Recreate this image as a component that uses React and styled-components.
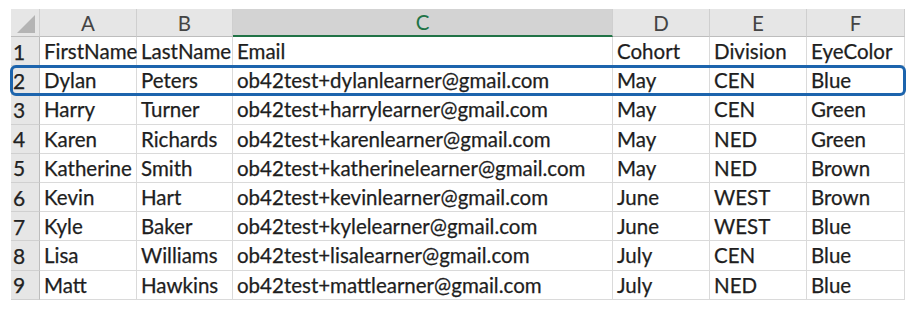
import React from "react";
import styled, { createGlobalStyle } from "styled-components";

const COLUMNS = ["A", "B", "C", "D", "E", "F"];
const ACTIVE_COLUMN = "C";
const SELECTED_ROW = 2;

const rows = [
    ["FirstName", "LastName", "Email", "Cohort", "Division", "EyeColor"],
    ["Dylan", "Peters", "ob42test+dylanlearner@gmail.com", "May", "CEN", "Blue"],
    ["Harry", "Turner", "ob42test+harrylearner@gmail.com", "May", "CEN", "Green"],
    ["Karen", "Richards", "ob42test+karenlearner@gmail.com", "May", "NED", "Green"],
    ["Katherine", "Smith", "ob42test+katherinelearner@gmail.com", "May", "NED", "Brown"],
    ["Kevin", "Hart", "ob42test+kevinlearner@gmail.com", "June", "WEST", "Brown"],
    ["Kyle", "Baker", "ob42test+kylelearner@gmail.com", "June", "WEST", "Blue"],
    ["Lisa", "Williams", "ob42test+lisalearner@gmail.com", "July", "CEN", "Blue"],
    ["Matt", "Hawkins", "ob42test+mattlearner@gmail.com", "July", "NED", "Blue"],
];

function App() {
    return (
        <>
            <GlobalStyle />
            <Page>
                <SheetWrap>
                    <Sheet>
                        <CornerCell>
                            <svg width="29" height="28" viewBox="0 0 29 28">
                                <polygon points="6,24 24,24 24,6" fill="#b4b4b4" />
                            </svg>
                        </CornerCell>
                        {COLUMNS.map((col) => (
                            <ColHeader key={col} active={col === ACTIVE_COLUMN}>
                                {col}
                            </ColHeader>
                        ))}
                        {rows.map((row, i) => (
                            <React.Fragment key={i}>
                                <RowHeader>{i + 1}</RowHeader>
                                {row.map((value, j) => (
                                    <Cell key={j}>{value}</Cell>
                                ))}
                            </React.Fragment>
                        ))}
                    </Sheet>
                    <Selection row={SELECTED_ROW} />
                </SheetWrap>
            </Page>
        </>
    );
}

export default App;

const HEADER_H = 28;
const ROW_H = 29.2;

const GlobalStyle = createGlobalStyle`
    body {
        margin: 0;
        background: #fff;
        font-family: "Lato", "Liberation Sans", sans-serif;
    }
`;

const Page = styled.div`
    width: 917px;
    height: 311px;
    padding: 9px 0 0 11px;
    box-sizing: border-box;
    overflow: hidden;
`;

const SheetWrap = styled.div`
    position: relative;
    width: fit-content;
`;

const Sheet = styled.div`
    display: grid;
    grid-template-columns: 29px 97px 96px 380px 97px 97px 98px;
    grid-template-rows: ${HEADER_H}px repeat(9, ${ROW_H}px);
`;

const CornerCell = styled.div`
    background: #e6e6e6;
    border-right: 1px solid #d0d0d0;
    border-bottom: 1px solid #bdbdbd;
    box-sizing: border-box;
    svg {
        display: block;
    }
`;

const ColHeader = styled.div`
    display: flex;
    align-items: center;
    justify-content: center;
    box-sizing: border-box;
    background: ${({ active }) => (active ? "#d3d3d3" : "#e6e6e6")};
    color: ${({ active }) => (active ? "#217346" : "#444")};
    border-right: 1px solid #cfcfcf;
    border-bottom: ${({ active }) =>
        active ? "2px solid #217346" : "1px solid #bdbdbd"};
    font-size: 20.5px;
`;

const RowHeader = styled.div`
    display: flex;
    align-items: center;
    box-sizing: border-box;
    padding-left: 2px;
    background: #e6e6e6;
    color: #222;
    border-right: 1px solid #bdbdbd;
    border-bottom: 1px solid #d0d0d0;
    font-size: 21px;
    -webkit-text-stroke: 0.25px #222;
`;

const Cell = styled.div`
    display: flex;
    align-items: center;
    box-sizing: border-box;
    padding-left: 4px;
    white-space: nowrap;
    color: #1e1e1e;
    border-right: 1px solid #dadada;
    border-bottom: 1px solid #dadada;
    font-size: 20.5px;
    -webkit-text-stroke: 0.25px #1e1e1e;
`;

const Selection = styled.div`
    position: absolute;
    left: -1px;
    right: -1px;
    top: ${({ row }) => HEADER_H + ROW_H * (row - 1) - 1}px;
    height: ${ROW_H + 2}px;
    border: 3px solid #1c64ad;
    border-radius: 6px;
    box-sizing: border-box;
    pointer-events: none;
`;
